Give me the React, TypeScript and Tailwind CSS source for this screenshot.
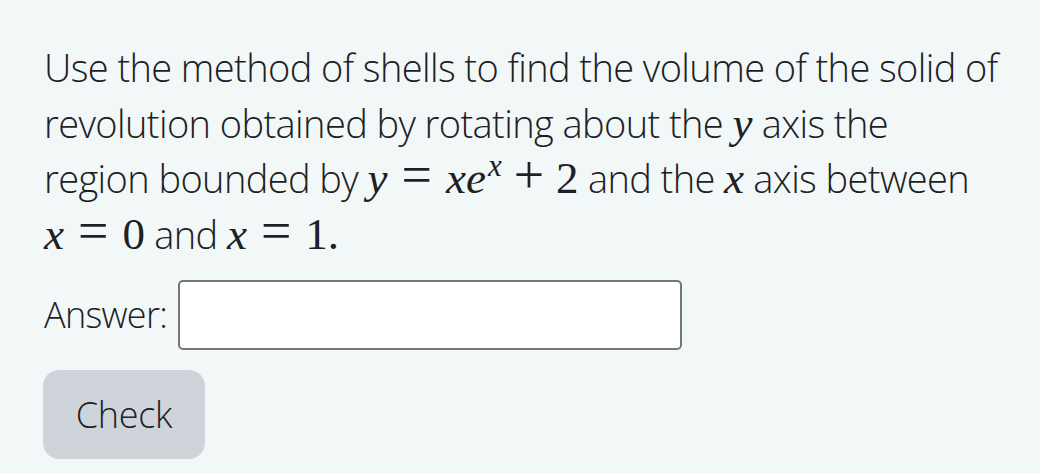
import React from 'react';

const MI: React.FC<{ children: React.ReactNode }> = ({ children }) => (
  <span className="font-['Liberation_Serif',serif] italic text-[45px] leading-[40px] tracking-normal">{children}</span>
);

const MN: React.FC<{ children: React.ReactNode }> = ({ children }) => (
  <span className="font-['Liberation_Serif',serif] text-[45px] leading-[40px] tracking-normal">{children}</span>
);

const Rel: React.FC<{ children: React.ReactNode }> = ({ children }) => (
  <span className="font-['Liberation_Serif',serif] text-[54px] leading-[40px] tracking-normal mx-[14px]">{children}</span>
);

const Bin: React.FC<{ children: React.ReactNode }> = ({ children }) => (
  <span className="font-['Liberation_Serif',serif] text-[54px] leading-[40px] tracking-normal mx-[12px]">{children}</span>
);

export default function App() {
  return (
    <div className="min-h-screen bg-[#f2f7f7] text-[#1d2125] font-['Open_Sans',sans-serif] px-[44px] pt-[40px]">
      <p className="text-[38px] leading-[55.5px] tracking-[-0.6px] font-light whitespace-nowrap">
        Use the method of shells to find the volume of the solid of
        <br />
        revolution obtained by rotating about the <MI>y</MI> axis the
        <br />
        region bounded by <MI>y</MI>
        <Rel>=</Rel>
        <MI>xe</MI>
        <sup className="font-['Liberation_Serif',serif] italic text-[31px] leading-none top-[-17px] ml-[2px] tracking-normal">x</sup>
        <Bin>+</Bin>
        <MN>2</MN> and the <MI>x</MI> axis between
        <br />
        <MI>x</MI>
        <Rel>=</Rel>
        <MN>0</MN> and <MI>x</MI>
        <Rel>=</Rel>
        <MN>1.</MN>
      </p>

      <div className="flex items-center gap-[11px] mt-[18px]">
        <label className="text-[36px] tracking-[-0.7px] font-light">Answer:</label>
        <input
          type="text"
          className="w-[504px] h-[70px] bg-white border-2 border-[#767676] rounded-[5px] outline-none px-3 text-[32px]"
        />
      </div>

      <button className="mt-[20px] w-[162px] h-[89px] rounded-[16px] bg-[#ced4da] text-[36px] tracking-[-0.3px] font-light text-[#1d2125] -ml-[1px]">
        Check
      </button>
    </div>
  );
}
